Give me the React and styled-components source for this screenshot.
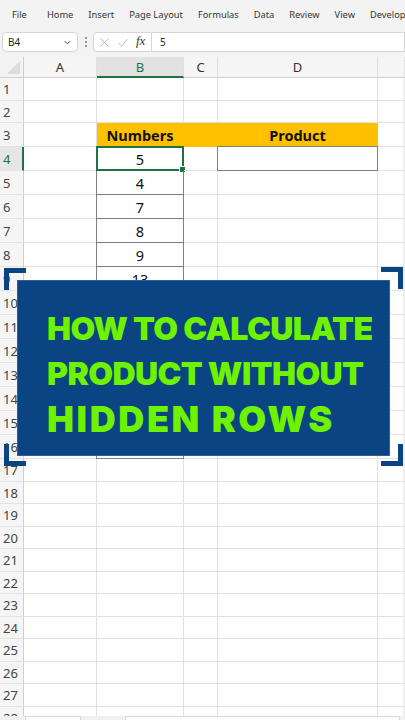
import React from "react";
import styled, { createGlobalStyle, css } from "styled-components";

const Global = createGlobalStyle`
  html, body { margin: 0; padding: 0; background: #fff; }
  body { width: 405px; height: 720px; overflow: hidden; font-family: "Noto Sans", "Open Sans", sans-serif; }
  * { box-sizing: border-box; }
`;

const Page = styled.div`
  position: relative;
  width: 405px;
  height: 720px;
  display: flex;
  flex-direction: column;
  background: #f4f3f4;
  overflow: hidden;
`;

const MenuBar = styled.div`
  height: 29px;
  display: flex;
  align-items: center;
  gap: 15px;
  padding-left: 12px;
  font-size: 9.3px;
  color: #333;
  white-space: nowrap;
`;

const MenuItem = styled.span`
  margin-right: ${(p) => (p.$extra ? "5px" : "0")};
`;

const FormulaRow = styled.div`
  height: 26px;
  display: flex;
  align-items: center;
  padding: 0 0 0 2px;
`;

const NameBox = styled.div`
  width: 76px;
  height: 20px;
  background: #fff;
  border: 1px solid #d6d6d6;
  border-radius: 4px;
  display: flex;
  align-items: center;
  justify-content: space-between;
  padding: 0 5px;
  font-size: 10px;
  color: #222;
`;

const Dots = styled.div`
  width: 15px;
  display: flex;
  flex-direction: column;
  align-items: center;
  gap: 2px;
  span { width: 2px; height: 2px; background: #777; border-radius: 1px; }
`;

const FxBox = styled.div`
  width: 59px;
  height: 20px;
  background: #fff;
  border: 1px solid #d6d6d6;
  border-radius: 4px 0 0 4px;
  display: flex;
  align-items: center;
  gap: 7px;
  padding-left: 5px;
`;

const Fx = styled.span`
  font-family: "Liberation Serif", serif;
  font-style: italic;
  font-size: 13px;
  color: #333;
  margin-top: -2px;
`;

const FormulaInput = styled.div`
  flex: 1;
  height: 20px;
  background: #fff;
  border: 1px solid #d6d6d6;
  border-left: none;
  display: flex;
  align-items: center;
  padding-left: 8px;
  font-size: 10px;
  color: #222;
`;

const Spacer = styled.div`
  height: 2px;
`;

const Sheet = styled.div`
  flex: 1;
  background: #fff;
  overflow: hidden;
  display: grid;
  grid-template-columns: 24px 73px 87px 34px 160px 27px;
  align-content: start;
`;

const Corner = styled.div`
  height: 21px;
  background: #f3f3f3;
  border-right: 1px solid #cfcfcf;
  border-bottom: 1px solid #cfcfcf;
  position: relative;
  &::after {
    content: "";
    position: absolute;
    right: 3px;
    bottom: 3px;
    border-left: 13px solid transparent;
    border-bottom: 13px solid #dcdcdc;
  }
`;

const ColHead = styled.div`
  height: 21px;
  background: ${(p) => (p.$sel ? "#e2e2e2" : "#f5f5f5")};
  border-right: 1px solid #e0e0e0;
  border-bottom: ${(p) => (p.$sel ? "2px solid #1e7145" : "1px solid #cfcfcf")};
  display: flex;
  align-items: center;
  justify-content: center;
  font-size: 13px;
  color: ${(p) => (p.$sel ? "#1e7145" : "#333")};
`;

const RowHead = styled.div`
  height: ${(p) => p.$h}px;
  background: ${(p) => (p.$sel ? "#e6e6e6" : "#f5f5f5")};
  border-right: ${(p) => (p.$sel ? "2px solid #1e7145" : "1px solid #cfcfcf")};
  border-bottom: 1px solid #e3e3e3;
  display: flex;
  align-items: center;
  padding-left: 3px;
  font-size: 13px;
  color: ${(p) => (p.$sel ? "#1e7145" : "#444")};
`;

const Cell = styled.div`
  position: relative;
  height: ${(p) => p.$h}px;
  border-right: 1px solid #e1e1e1;
  border-bottom: 1px solid #e1e1e1;
  display: flex;
  align-items: center;
  justify-content: center;
  font-size: 14.5px;
  color: #111;
  ${(p) =>
    p.$head &&
    css`
      background: #ffc000;
      font-weight: 700;
      border-color: #ffc000;
    `}
  ${(p) =>
    p.$boxed &&
    css`
      border-right: 1px solid #808080;
      border-bottom: 1px solid #808080;
      border-left: 1px solid #808080;
      margin-left: -1px;
    `}
  ${(p) =>
    p.$boxTop &&
    css`
      &::before {
        content: "";
        position: absolute;
        left: -1px;
        right: -1px;
        top: -1px;
        height: 1px;
        background: #808080;
      }
    `}
  ${(p) =>
    p.$wide &&
    css`
      border-right-color: #eeeeee;
      border-right-width: 2px;
    `}
`;

const Selection = styled.div`
  position: absolute;
  inset: -1px;
  border: 2px solid #1e7145;
  pointer-events: none;
  &::after {
    content: "";
    position: absolute;
    right: -4px;
    bottom: -4px;
    width: 5px;
    height: 5px;
    background: #1e7145;
    border: 1px solid #fff;
  }
`;

const Footer = styled.div`
  height: 4px;
  background: #f3eef2;
  display: flex;
  align-items: flex-start;
`;

const SheetTab = styled.div`
  margin-left: 25px;
  width: 56px;
  height: 4px;
  background: #fff;
  border: 1px solid #d8d8d8;
  border-bottom: none;
`;

const Scroll = styled.div`
  margin-left: 44px;
  width: 275px;
  height: 4px;
  background: #fff;
  border: 1px solid #d8d8d8;
  border-bottom: none;
`;

const Overlay = styled.div`
  position: absolute;
  left: 18px;
  top: 281px;
  width: 371px;
  height: 174px;
  background: #0a4482;
  outline: 1px solid #2f5f98;
  display: flex;
  flex-direction: column;
  justify-content: flex-start;
  padding-left: 29px;
  padding-top: 32px;
  font-family: Inter, "Noto Sans", sans-serif;
  font-weight: 900;
  color: #6ef202;
  text-transform: uppercase;
  line-height: 1;
`;

const Line = styled.div`
  font-size: ${(p) => p.$size}px;
  letter-spacing: ${(p) => p.$ls}px;
  margin-top: ${(p) => p.$mt || 0}px;
  white-space: nowrap;
`;

const Bracket = styled.div`
  position: absolute;
  width: 22px;
  height: 22px;
  border-color: #0a4482;
  border-style: solid;
  border-width: 0;
  ${(p) => p.$pos}
`;

const menu = ["Home", "Insert", "Page Layout", "Formulas", "Data", "Review", "View", "Developer"];

const rowHeights = [23, 22, 24, 24, 24, 24, 24, 24, 24, 24, 24, 24, 24, 24, 24, 24, 23, 22, 23, 22, 23, 22, 23, 22, 23, 22, 23, 22];
const bVals = { 3: "Numbers", 4: "5", 5: "4", 6: "7", 7: "8", 8: "9", 9: "13" };

export default function App() {
  return (
    <>
      <Global />
      <Page>
        <MenuBar>
          <MenuItem $extra>File</MenuItem>
          {menu.map((m) => (
            <MenuItem key={m}>{m}</MenuItem>
          ))}
        </MenuBar>
        <FormulaRow>
          <NameBox>
            <span>B4</span>
            <svg width="9" height="9" viewBox="0 0 10 10">
              <path d="M2 3.5 L5 6.5 L8 3.5" fill="none" stroke="#444" strokeWidth="1.1" />
            </svg>
          </NameBox>
          <Dots>
            <span />
            <span />
            <span />
          </Dots>
          <FxBox>
            <svg width="11" height="11" viewBox="0 0 12 12">
              <path d="M1.5 1.5 L10.5 10.5 M10.5 1.5 L1.5 10.5" stroke="#b5b5b5" strokeWidth="1" />
            </svg>
            <svg width="12" height="11" viewBox="0 0 12 12">
              <path d="M1 6.5 L4.5 10 L11 2.5" fill="none" stroke="#b5b5b5" strokeWidth="1" />
            </svg>
            <Fx>fx</Fx>
          </FxBox>
          <FormulaInput>5</FormulaInput>
        </FormulaRow>
        <Spacer />
        <Sheet>
          <Corner />
          <ColHead>A</ColHead>
          <ColHead $sel>B</ColHead>
          <ColHead>C</ColHead>
          <ColHead>D</ColHead>
          <ColHead />
          {rowHeights.map((h, i) => {
            const r = i + 1;
            const inBox = r >= 4 && r <= 16;
            return (
              <React.Fragment key={r}>
                <RowHead $h={h} $sel={r === 4}>{r}</RowHead>
                <Cell $h={h} />
                <Cell $h={h} $head={r === 3} $boxed={inBox} $boxTop={r === 4}>
                  {bVals[r]}
                  {r === 4 && <Selection />}
                </Cell>
                <Cell $h={h} $head={r === 3} />
                <Cell $h={h} $head={r === 3} $boxed={r === 4} $boxTop={r === 4}>
                  {r === 3 ? "Product" : ""}
                </Cell>
                <Cell $h={h} $wide />
              </React.Fragment>
            );
          })}
        </Sheet>
        <Footer>
          <SheetTab />
          <Scroll />
        </Footer>
        <Overlay>
          <Line $size={32} $ls={-0.6}>How to calculate</Line>
          <Line $size={32} $ls={-0.6} $mt={13}>Product without</Line>
          <Line $size={36} $ls={2.6} $mt={11}>Hidden rows</Line>
        </Overlay>
        <Bracket $pos="left:4px;top:268px;border-top-width:5px;border-left-width:5px;" />
        <Bracket $pos="left:381px;top:267px;border-top-width:5px;border-right-width:5px;" />
        <Bracket $pos="left:4px;top:444px;border-bottom-width:5px;border-left-width:5px;" />
        <Bracket $pos="left:381px;top:444px;border-bottom-width:5px;border-right-width:5px;" />
      </Page>
    </>
  );
}
